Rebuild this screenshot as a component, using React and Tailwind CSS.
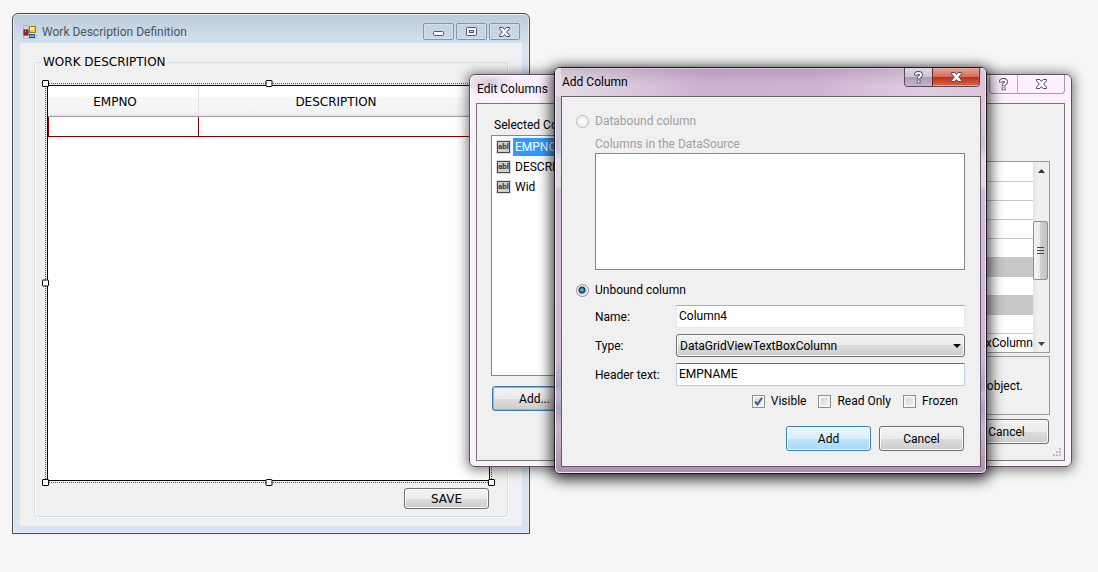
import React from 'react';
import clsx from 'clsx';

const BUTTON_FACE =
  'bg-[linear-gradient(#f3f3f3,#ebebeb_50%,#dcdcdc_50%,#cdcdcd)] border-[#707070] shadow-[inset_0_0_0_1px_#fafafa]';
const BUTTON_DEFAULT =
  'bg-[linear-gradient(#f3f3f3,#ebebeb_50%,#dcdcdc_50%,#cdcdcd)] border-[#3c7fb1] shadow-[inset_0_0_0_1px_#46cdf3]';
const BUTTON_HOT =
  'bg-[linear-gradient(#eaf6fd,#d9f0fc_50%,#bee6fd_50%,#a7d9f5)] border-[#3c7fb1] shadow-[inset_0_0_0_1px_#f2fafe]';

function PushButton({ face = BUTTON_FACE, className, children }) {
  return (
    <button
      type="button"
      className={clsx('flex w-[85px] items-center justify-center rounded-[3px] border', face, className)}
    >
      {children}
    </button>
  );
}

function AppIcon() {
  return (
    <svg width="14" height="14" viewBox="0 0 14 14" className="shrink-0">
      <path d="M0.5 0.5H5V4M0.5 0.5V13.5H13.5V9" fill="none" stroke="#b5bcc4" />
      <rect x="1" y="5" width="4" height="5" fill="#b3261e" stroke="#6f1410" strokeWidth="1" />
      <rect x="2" y="6" width="1" height="1" fill="#f2a59f" />
      <rect x="6.5" y="1.5" width="6" height="6" fill="#f7c93a" stroke="#a67c12" />
      <rect x="7" y="2" width="4" height="3" fill="#fdeaa0" />
      <rect x="6.5" y="9.5" width="5" height="3" fill="#5d9cf0" stroke="#2d5fa8" strokeWidth="1" />
    </svg>
  );
}

function MinimizeGlyph() {
  return (
    <svg width="11" height="11" viewBox="0 0 11 11">
      <rect x="0.5" y="5.5" width="10" height="4" rx="1" fill="#f4f4f4" stroke="#535666" />
    </svg>
  );
}

function MaximizeGlyph() {
  return (
    <svg width="11" height="9" viewBox="0 0 11 9">
      <rect x="0.5" y="0.5" width="10" height="8" rx="1" fill="#f4f4f4" stroke="#535666" />
      <rect x="3.5" y="3.5" width="4" height="2" fill="#c5d3e3" stroke="#535666" />
    </svg>
  );
}

function CloseGlyph() {
  return (
    <svg width="11" height="10" viewBox="0 0 11 10">
      <path
        d="M0.5 0.5H3.8L5.5 2.4L7.2 0.5H10.5V1.8L7.7 5L10.5 8.2V9.5H7.2L5.5 7.6L3.8 9.5H0.5V8.2L3.3 5L0.5 1.8Z"
        fill="#fafafa"
        stroke="#484b5c"
      />
    </svg>
  );
}

function HelpGlyph() {
  return (
    <svg width="9" height="13" viewBox="0 0 9 13" fill="none">
      <path d="M2 4.6V3.4Q2 2 4.4 2Q7 2 7 4Q7 5.2 5.6 5.9Q4.6 6.4 4.6 8.2M4.6 9.2V12.2" stroke="#484b5c" strokeWidth="3.8" />
      <path d="M2 3.8V3.4Q2 2 4.4 2Q7 2 7 4Q7 5.2 5.6 5.9Q4.6 6.4 4.6 7.6M4.6 9.6V11.6" stroke="#fff" strokeWidth="2" />
    </svg>
  );
}

function TextBoxIcon() {
  return (
    <span className="flex h-[12px] w-[13px] shrink-0 items-center justify-center border border-[#4a4a4a] bg-[#cfcfcf] text-[8px] leading-none font-bold text-[#333] outline outline-[#dcdcdc]">
      abl
    </span>
  );
}

function Handle({ className }) {
  return <span className={clsx('absolute size-[7px] rounded-[1px] border border-black bg-white', className)} />;
}

function FormButton({ label, children }) {
  return (
    <button
      type="button"
      aria-label={label}
      className="flex h-[17px] w-[31px] items-center justify-center rounded-[2px] border border-[#8595ab] bg-[#c5d3e3]/60 shadow-[inset_0_0_0_1px_#d5e0ec]"
    >
      {children}
    </button>
  );
}

function DesignerForm() {
  return (
    <section className="absolute top-[13px] left-[12px] w-[518px] rounded-t-md border border-[#4b4b4b] bg-[linear-gradient(#bccad9,#d7e4f2_32px)] px-[7px] pb-[7px] shadow-[inset_0_0_0_1px_#e3ecf5]">
      <header className="flex h-[29px] items-center pt-[6px] pr-[2px] pl-[3px] text-[#4a5563]">
        <AppIcon />
        <h1 className="ml-[5px]">Work Description Definition</h1>
        <div className="ml-auto flex gap-[2px]">
          <FormButton label="Minimize"><MinimizeGlyph /></FormButton>
          <FormButton label="Maximize"><MaximizeGlyph /></FormButton>
          <FormButton label="Close"><CloseGlyph /></FormButton>
        </div>
      </header>
      <div className="bg-[#f0f0f0] px-[14px] pt-[11px] pb-[9px] font-['DejaVu_Sans',Verdana,sans-serif]">
        <fieldset className="rounded-[3px] border border-[#d5dfe5] pr-[15px] pb-[7px] pl-[10px] shadow-[inset_1px_0_0_#fff,1px_1px_0_#fff]">
          <legend className="-ml-[4px] px-[2px]">WORK DESCRIPTION</legend>
          <div className="relative mt-[13px] h-[400px] border border-dotted border-[#555] p-px">
            <div className="h-full border border-black bg-white">
              <table className="w-full table-fixed border-separate border-spacing-0">
                <thead>
                  <tr className="h-[31px] bg-[linear-gradient(#fff_35%,#f7f8fa_35%,#f1f2f4_90%,#d5d5d5)]">
                    <th className="w-[151px] border-r border-b border-r-[#dfe1e4] border-b-[#a0a0a0] pt-[2px] pr-4 font-normal">
                      EMPNO
                    </th>
                    <th className="border-b border-[#a0a0a0] pt-[2px] pr-4 font-normal">DESCRIPTION</th>
                  </tr>
                </thead>
                <tbody>
                  <tr className="h-5">
                    <td className="border-x border-b border-[#8b0000]" />
                    <td className="border-r border-b border-[#8b0000]" />
                  </tr>
                </tbody>
              </table>
            </div>
            <Handle className="-top-1 -left-1" />
            <Handle className="-top-1 left-1/2 -translate-x-1/2" />
            <Handle className="-top-1 -right-1" />
            <Handle className="top-1/2 -left-1 -translate-y-1/2" />
            <Handle className="top-1/2 -right-1 -translate-y-1/2" />
            <Handle className="-bottom-1 -left-1" />
            <Handle className="-bottom-1 left-1/2 -translate-x-1/2" />
            <Handle className="-right-1 -bottom-1" />
          </div>
          <PushButton className="mt-[5px] mr-[3px] ml-auto h-[21px]">SAVE</PushButton>
        </fieldset>
      </div>
    </section>
  );
}

function ListItem({ selected, children }) {
  return (
    <li className="flex h-5 items-center gap-[3px] pl-[5px]">
      <TextBoxIcon />
      <span className={clsx('h-[18px] px-[2px] leading-[18px]', selected && 'bg-[#3399ff] text-white')}>
        {children}
      </span>
    </li>
  );
}

const PROPERTY_ROWS = [
  { id: 1 },
  { id: 2 },
  { id: 3 },
  { id: 4 },
  { id: 5 },
  { id: 6, category: true },
  { id: 7 },
  { id: 8, category: true },
  { id: 9 },
  { id: 10, value: 'DataGridViewTextBoxColumn' },
];

function PropertyGrid() {
  return (
    <div className="flex border border-[#999] bg-white">
      <table className="min-w-0 flex-1 table-fixed">
        <tbody className="block pt-px">
          {PROPERTY_ROWS.map((row) => (
            <tr
              key={row.id}
              className={clsx(
                'flex h-[19px] items-center overflow-hidden border-b border-[#c8c8c8] last:h-[18px] last:border-b-0',
                row.category && 'bg-[#c8c8c8]'
              )}
            >
              <td className="w-[177px] shrink-0" />
              <td className="whitespace-nowrap">{row.value}</td>
            </tr>
          ))}
        </tbody>
      </table>
      <div className="flex w-4 shrink-0 flex-col bg-[linear-gradient(90deg,#e3e3e3,#f0f0f0_30%,#efefef)]">
        <button type="button" aria-label="Scroll up" className="flex h-[17px] items-center justify-center">
          <svg width="7" height="4" viewBox="0 0 7 4"><path d="M3.5 0L7 4H0Z" fill="#333" /></svg>
        </button>
        <div className="mt-[42px] flex h-[59px] w-[15px] items-center justify-center rounded-[2px] border border-[#8f8f8f] bg-[linear-gradient(90deg,#f5f5f5,#e9e9eb_45%,#d0d0d4_50%,#c2c2c6)]">
          <svg width="7" height="8" viewBox="0 0 7 8"><path d="M0 0.5H7M0 3.5H7M0 6.5H7" stroke="#444" /></svg>
        </div>
        <button type="button" aria-label="Scroll down" className="mt-auto flex h-[17px] items-center justify-center">
          <svg width="7" height="4" viewBox="0 0 7 4"><path d="M0 0H7L3.5 4Z" fill="#444" /></svg>
        </button>
      </div>
    </div>
  );
}

function EditColumnsDialog() {
  return (
    <section className="absolute top-[74px] left-[469px] w-[603px] rounded-md border border-[#5a535a] bg-[radial-gradient(30px_12px_at_18px_8px,#d9c9de,transparent),linear-gradient(#fdeffd,#fdeffd)] px-[6px] pb-[5px] shadow-[inset_0_0_0_1px_#fffaff,0_1px_12px_2px_rgba(0,0,0,0.5)]">
      <header className="flex h-7 items-start justify-between">
        <h2 className="pt-[6px] pl-[1px]">Edit Columns</h2>
        <div className="flex h-[19px] rounded-b-[4px] border border-t-0 border-[#a89ba8]">
          <button type="button" aria-label="Help" className="flex w-7 items-center justify-center border-r border-[#b8abb8]">
            <HelpGlyph />
          </button>
          <button type="button" aria-label="Close" className="flex w-[46px] items-center justify-center">
            <CloseGlyph />
          </button>
        </div>
      </header>
      <div className="flex gap-3 border border-[#777] bg-[#f0f0f0] pt-[13px] pr-[14px] pb-[16px] pl-[14px]">
        <div className="w-[210px]">
          <p className="pl-[3px]">Selected Columns:</p>
          <ul className="mt-[2px] h-[241px] border border-[#828790] bg-white pt-px">
            <ListItem selected>EMPNO</ListItem>
            <ListItem>DESCRIPTION</ListItem>
            <ListItem>Wid</ListItem>
          </ul>
          <PushButton face={BUTTON_DEFAULT} className="mt-[10px] ml-px h-[25px]">Add...</PushButton>
        </div>
        <div className="flex flex-1 flex-col pt-[44px]">
          <PropertyGrid />
          <p className="mt-[3px] flex h-[59px] items-center justify-end border border-[#999] pr-[26px]">object.</p>
          <PushButton className="mt-1 mr-px h-[25px] self-end">Cancel</PushButton>
        </div>
      </div>
      <svg width="9" height="9" viewBox="0 0 9 9" className="absolute right-[9px] bottom-[9px]">
        <path d="M6 0h2v2h-2zM3 3h2v2h-2zM6 3h2v2h-2zM0 6h2v2h-2zM3 6h2v2h-2zM6 6h2v2h-2z" fill="#bdbdbd" />
      </svg>
    </section>
  );
}

function RadioOption({ id, label, disabled, defaultChecked }) {
  return (
    <div className={clsx('flex h-4 items-center gap-[6px]', disabled && 'text-[#a0a0a0]')}>
      <input
        id={id}
        type="radio"
        name="binding"
        disabled={disabled}
        defaultChecked={defaultChecked}
        className="size-[13px] appearance-none rounded-full border border-[#8e8f8f] bg-[radial-gradient(circle,#fff,#e6e6e6)] shadow-[inset_0_0_0_1px_#f4f4f4] checked:bg-[radial-gradient(circle_at_5px_5px,#8fe0fb,#1d6d9c_2px,#0d3550_3px,#cfd8de_4px,#e8e8e8)] disabled:border-[#bcbcbc]"
      />
      <label htmlFor={id}>{label}</label>
    </div>
  );
}

function CheckOption({ id, label, defaultChecked }) {
  return (
    <div className="relative flex h-4 items-center gap-[6px]">
      <input
        id={id}
        type="checkbox"
        defaultChecked={defaultChecked}
        className="peer size-[13px] appearance-none border border-[#8e8f8f] bg-[linear-gradient(135deg,#c9cdd3,#f6f6f6)] shadow-[inset_0_0_0_2px_#f4f4f4]"
      />
      <svg
        width="9"
        height="9"
        viewBox="0 0 9 9"
        className="pointer-events-none absolute left-[2px] hidden peer-checked:block"
      >
        <path d="M1 4.5L3.5 7.5L8 0.8" fill="none" stroke="#4257a0" strokeWidth="2" />
      </svg>
      <label htmlFor={id}>{label}</label>
    </div>
  );
}

function FieldRow({ id, label, children }) {
  return (
    <div className="flex h-[23px] items-center">
      <label htmlFor={id} className="w-[81px]">{label}</label>
      <div className="relative h-full flex-1">{children}</div>
    </div>
  );
}

function AddColumnDialog() {
  return (
    <section className="absolute top-[67px] left-[554px] w-[433px] rounded-md border border-[#1e1a1e] bg-[linear-gradient(90deg,#d5bfd8_50%,#cdb5d0)] shadow-[0_3px_14px_3px_rgba(0,0,0,0.75)]">
      <div className="rounded-[5px] bg-[linear-gradient(90deg,#e6dde7,#ceb0d2_35%,#d0b3d4_60%,#e0cde1_85%,#d9c6da)] bg-size-[100%_28px] bg-no-repeat">
        <div className="rounded-[5px] bg-[linear-gradient(transparent_28px,#d9cbdb_28px,#c9c4d8_80px,#e6dbe8_92px,#e0d2e2_120px,#d4bdd8_121px,#d0b8d4_290px,#a9a7c4_318px,#cdb5d0_326px,#a9a3c0_340px,#cbb3ce_360px,#ab93ad)] pr-[5px] pb-[6px] pl-[6px] shadow-[inset_0_0_0_1px_#f1e6f2]">
          <header className="flex h-7 items-start justify-between bg-[linear-gradient(rgba(90,70,95,0.2),transparent_60%)]">
            <h2 className="pt-[6px] pl-[1px]">Add Column</h2>
            <div className="mr-px flex h-[19px] overflow-hidden rounded-b-[4px] border border-t-0 border-[#5a4a5c]">
              <button
                type="button"
                aria-label="Help"
                className="flex w-7 items-center justify-center border-r border-[#6b2a2a] bg-[linear-gradient(#e0d5e1,#cfc3d1_50%,#a99bb0_50%,#c4b5cb)]"
              >
                <HelpGlyph />
              </button>
              <button
                type="button"
                aria-label="Close"
                className="flex w-[46px] items-center justify-center bg-[linear-gradient(#e4a79b,#d06a58_50%,#b92e17_50%,#d8694a)] shadow-[inset_0_-1px_0_#eda48f]"
              >
                <CloseGlyph />
              </button>
            </div>
          </header>
          <form className="border border-[#6a5b6c] bg-[#f0f0f0] pt-4 pr-[15px] pb-[15px] pl-[14px]">
            <RadioOption id="databound" label="Databound column" disabled />
            <div className="pl-[19px]">
              <p className="mt-[7px] text-[#a0a0a0]">Columns in the DataSource</p>
              <div className="mt-px h-[117px] border border-[#828790] bg-white" />
            </div>
            <div className="mt-3">
              <RadioOption id="unbound" label="Unbound column" defaultChecked />
            </div>
            <div className="mt-[7px] flex flex-col gap-[6px] pl-[19px]">
              <FieldRow id="name" label="Name:">
                <input
                  id="name"
                  type="text"
                  defaultValue="Column4"
                  className="h-full w-full rounded-[1px] border border-[#e3e9ef] border-t-[#abadb3] bg-white px-[2px] pb-px"
                />
              </FieldRow>
              <FieldRow id="type" label="Type:">
                <select
                  id="type"
                  className={clsx('h-full w-full appearance-none rounded-[3px] border px-[3px]', BUTTON_FACE)}
                >
                  <option>DataGridViewTextBoxColumn</option>
                </select>
                <svg
                  width="8"
                  height="4"
                  viewBox="0 0 8 4"
                  className="pointer-events-none absolute top-[10px] right-1"
                >
                  <path d="M0 0H8L4 4Z" fill="#000" />
                </svg>
              </FieldRow>
              <FieldRow id="header" label="Header text:">
                <input
                  id="header"
                  type="text"
                  defaultValue="EMPNAME"
                  className="h-full w-full rounded-[1px] border border-[#b5cfe7] border-t-[#3d7bad] bg-white px-[2px] pb-px"
                />
              </FieldRow>
            </div>
            <div className="mt-[7px] flex justify-end gap-3 pr-[7px]">
              <CheckOption id="visible" label="Visible" defaultChecked />
              <CheckOption id="readonly" label="Read Only" />
              <CheckOption id="frozen" label="Frozen" />
            </div>
            <div className="mt-[17px] flex justify-end gap-2 pr-px">
              <PushButton face={BUTTON_HOT} className="h-[25px]">Add</PushButton>
              <PushButton className="h-[25px]">Cancel</PushButton>
            </div>
          </form>
        </div>
      </div>
    </section>
  );
}

export default function App() {
  return (
    <main className="relative min-h-screen w-full overflow-hidden bg-[#f6f6f6] font-['Roboto','Segoe_UI',sans-serif] text-[12px] leading-4 text-black">
      <DesignerForm />
      <EditColumnsDialog />
      <AddColumnDialog />
    </main>
  );
}
